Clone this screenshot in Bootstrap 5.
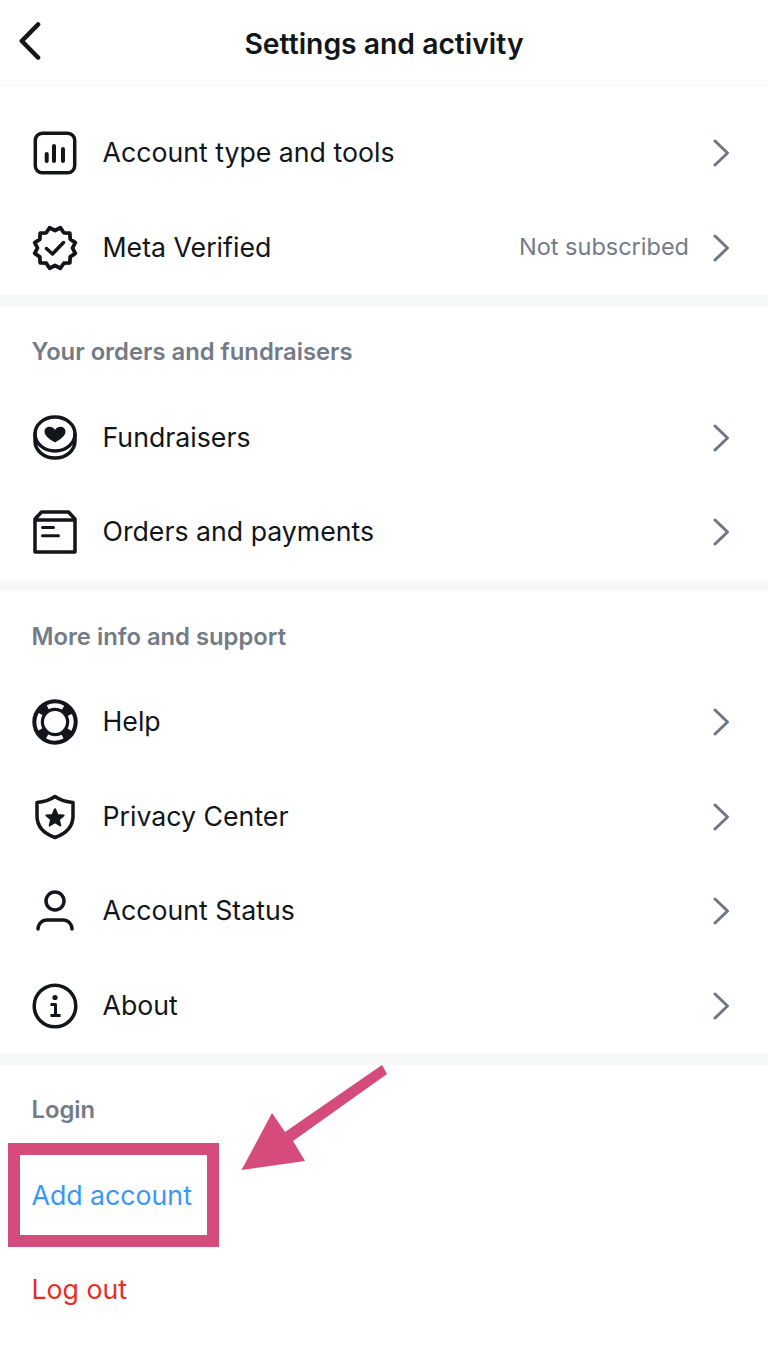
<!DOCTYPE html>
<html lang="en">
<head>
    <meta charset="UTF-8">
    <meta name="viewport" content="width=device-width, initial-scale=1.0">
    <title>Settings and activity</title>
    <link href="https://cdn.jsdelivr.net/npm/bootstrap@5.3.0/dist/css/bootstrap.min.css" rel="stylesheet">
    <style>
        body {
            font-family: "Inter", "Liberation Sans", sans-serif;
            color: #12161b;
            background: #fff;
            overflow: hidden;
        }
        .top-bar {
            height: 86px;
            border-bottom: 1px solid #f5f6f6;
            padding-left: 19px;
        }
        .top-title {
            font-size: 28.3px;
            font-weight: 600;
            line-height: 1;
            margin: 0;
            top: 43.5px;
            left: 0;
            right: 0;
            transform: translateY(-50%);
        }
        .group-gap {
            height: 11.5px;
            background: #f7f8f8;
        }
        .first-group {
            padding-top: 20px;
        }
        .group-title {
            height: 84px;
            padding: 7px 31.5px 0;
            font-size: 23.8px;
            font-weight: 600;
            color: #737b86;
        }
        .set-row {
            height: 94.5px;
            padding: 0 38px 0 31px;
            border: 0;
            font-size: 26.7px;
            color: #12161b;
            background: transparent;
        }
        .set-row > span {
            padding-bottom: 2px;
        }
        .text-row {
            padding-left: 31.5px;
        }
        .set-icon {
            width: 48px;
            height: 48px;
            margin-right: 23.5px;
            flex: none;
            fill: none;
            stroke: #12161b;
            stroke-width: 3.5;
            stroke-linecap: round;
            stroke-linejoin: round;
        }
        .row-note {
            font-size: 23.5px;
            color: #737b86;
            margin-right: 24px;
        }
        .row-chev {
            width: 17px;
            height: 28px;
            fill: none;
            stroke: #6f7782;
            stroke-width: 3;
            stroke-linecap: round;
            stroke-linejoin: round;
        }
        .add-link { color: #3897f8; }
        .out-link { color: #ec2b22; }
        .mark-box {
            left: 8px;
            top: 1143px;
            width: 211px;
            height: 104px;
            border: 12px solid #d54b7b;
        }
        .mark-arrow {
            left: 0;
            top: 1050px;
        }
    </style>
</head>
<body>
    <div class="position-relative">
        <!-- Header -->
        <div class="top-bar d-flex align-items-center">
            <svg width="22" height="38" viewBox="0 0 22 38" fill="none" stroke="#12161b" stroke-width="4.6" stroke-linecap="round" stroke-linejoin="round" class="mb-1">
                <path d="M19 2.5 2.8 19 19 35.5"/>
            </svg>
        </div>
        <h1 class="top-title position-absolute text-center">Settings and activity</h1>

        <div class="list-group list-group-flush first-group rounded-0">
            <a href="#" class="list-group-item set-row d-flex align-items-center">
                <svg class="set-icon" viewBox="0 0 48 48">
                    <rect x="4.3" y="4.3" width="39.4" height="39.4" rx="7"/>
                    <path stroke-width="4" d="M15.7 25v7M23 17v15M32 20v12"/>
                </svg>
                <span class="flex-grow-1">Account type and tools</span>
                <svg class="row-chev" viewBox="0 0 17 28"><path d="M2 2l12.500 12L2 26"/></svg>
            </a>
            <a href="#" class="list-group-item set-row d-flex align-items-center">
                <svg class="set-icon" viewBox="0 0 48 48">
                    <polygon id="badgeShape" stroke-width="3.800" points=""/>
                    <path d="M15.500 24.500l6 5.500 11-11.500"/>
                </svg>
                <span class="flex-grow-1">Meta Verified</span>
                <span class="row-note">Not subscribed</span>
                <svg class="row-chev" viewBox="0 0 17 28"><path d="M2 2l12.500 12L2 26"/></svg>
            </a>
        </div>
        <div class="group-gap"></div>

        <div class="group-title d-flex align-items-center">Your orders and fundraisers</div>
        <div class="list-group list-group-flush rounded-0">
            <a href="#" class="list-group-item set-row d-flex align-items-center">
                <svg class="set-icon" viewBox="0 0 48 48">
                    <ellipse cx="24" cy="20" rx="20" ry="17"/>
                    <path d="M4 20v7c0 9.500 9 17 20 17s20-7.500 20-17v-7"/>
                    <path fill="#12161b" stroke="none" d="M24 28.500c-5-3-10.500-6.500-10.500-11 0-3 2.400-4.700 5-4.700 2.300 0 4.200 1.100 5.500 3 1.300-1.900 3.200-3 5.500-3 2.600 0 5 1.700 5 4.700 0 4.500-5.500 8-10.500 11z"/>
                </svg>
                <span class="flex-grow-1">Fundraisers</span>
                <svg class="row-chev" viewBox="0 0 17 28"><path d="M2 2l12.500 12L2 26"/></svg>
            </a>
            <a href="#" class="list-group-item set-row d-flex align-items-center">
                <svg class="set-icon" viewBox="0 0 48 48">
                    <path d="M4 44V11l6.500-7h27l6.500 7v33zM4 12h40"/>
                    <path stroke-width="3" d="M11.500 19.500h11M11.500 27.800h16"/>
                </svg>
                <span class="flex-grow-1">Orders and payments</span>
                <svg class="row-chev" viewBox="0 0 17 28"><path d="M2 2l12.500 12L2 26"/></svg>
            </a>
        </div>
        <div class="group-gap"></div>

        <div class="group-title d-flex align-items-center">More info and support</div>
        <div class="list-group list-group-flush rounded-0">
            <a href="#" class="list-group-item set-row d-flex align-items-center">
                <svg class="set-icon" viewBox="0 0 48 48">
                    <circle cx="24" cy="24" r="22.700" fill="#12161b" stroke="none"/>
                    <circle cx="24" cy="24" r="16.500" stroke="#fff" stroke-width="4.400" stroke-linecap="butt" stroke-dasharray="16 9.920" stroke-dashoffset="8"/>
                    <circle cx="24" cy="24" r="11" fill="#fff" stroke="none"/>
                </svg>
                <span class="flex-grow-1">Help</span>
                <svg class="row-chev" viewBox="0 0 17 28"><path d="M2 2l12.500 12L2 26"/></svg>
            </a>
            <a href="#" class="list-group-item set-row d-flex align-items-center">
                <svg class="set-icon" viewBox="0 0 48 48">
                    <path d="M24 3.500c5 3.500 11 5.500 18 6v13.500c0 11-8 18-18 21.500c-10-3.500-18-10.500-18-21.500V9.500c7-.5 13-2.500 18-6z"/>
                    <polygon fill="#12161b" stroke-width="2" points="24,16.200 26.400,22 32.600,22.400 27.800,26.400 29.300,32.500 24,29.200 18.700,32.500 20.200,26.400 15.400,22.400 21.600,22"/>
                </svg>
                <span class="flex-grow-1">Privacy Center</span>
                <svg class="row-chev" viewBox="0 0 17 28"><path d="M2 2l12.500 12L2 26"/></svg>
            </a>
            <a href="#" class="list-group-item set-row d-flex align-items-center">
                <svg class="set-icon" viewBox="0 0 48 48">
                    <circle cx="24" cy="14" r="9"/>
                    <path d="M7 42c0-5 4-9 9-9h16c5 0 9 4 9 9"/>
                </svg>
                <span class="flex-grow-1">Account Status</span>
                <svg class="row-chev" viewBox="0 0 17 28"><path d="M2 2l12.500 12L2 26"/></svg>
            </a>
            <a href="#" class="list-group-item set-row d-flex align-items-center">
                <svg class="set-icon" viewBox="0 0 48 48">
                    <circle cx="24" cy="24" r="20.800"/>
                    <circle cx="24" cy="15.500" r="2.600" fill="#12161b" stroke="none"/>
                    <path stroke-width="3" stroke-linecap="butt" d="M19.500 22.500H24.500V33.500M19.500 33.500h10"/>
                </svg>
                <span class="flex-grow-1">About</span>
                <svg class="row-chev" viewBox="0 0 17 28"><path d="M2 2l12.500 12L2 26"/></svg>
            </a>
        </div>
        <div class="group-gap"></div>

        <div class="group-title d-flex align-items-center">Login</div>
        <div class="list-group list-group-flush rounded-0">
            <a href="#" class="list-group-item set-row text-row d-flex align-items-center"><span class="add-link">Add account</span></a>
            <a href="#" class="list-group-item set-row text-row d-flex align-items-center"><span class="out-link">Log out</span></a>
        </div>

        <!-- Annotation over the screenshot -->
        <div class="mark-box position-absolute"></div>
        <svg class="mark-arrow position-absolute" width="400" height="130" viewBox="0 1050 400 130">
            <polygon fill="#d54b7b" points="382,1065 387,1074 293,1141 305,1161 241.500,1170 272,1113 285,1132"/>
        </svg>
    </div>

    <script>
        // Outline of the verified badge
        var pts = [];
        for (var i = 0; i < 24; i++) {
            var r = i % 2 ? 21 : 17.5;
            var a = i * Math.PI / 12;
            pts.push((24 + r * Math.cos(a)).toFixed(1) + ',' + (24 + r * Math.sin(a)).toFixed(1));
        }
        document.getElementById('badgeShape').setAttribute('points', pts.join(' '));
    </script>
    <script src="https://cdn.jsdelivr.net/npm/bootstrap@5.3.0/dist/js/bootstrap.bundle.min.js"></script>
</body>
</html>
